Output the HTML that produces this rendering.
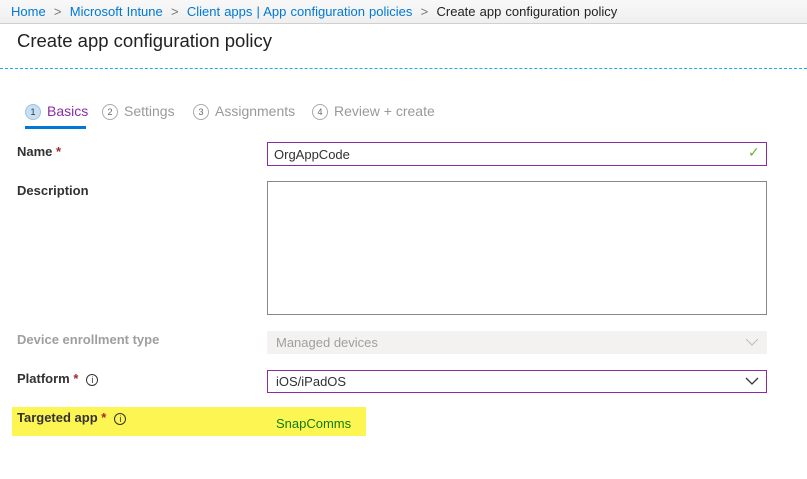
<!DOCTYPE html>
<html><head><style>
*{margin:0;padding:0;box-sizing:border-box}
body{width:807px;height:479px;background:#fff;font-family:"Liberation Sans",sans-serif;position:relative;overflow:hidden;color:#323130}
.a{position:absolute;white-space:nowrap}
.bc{left:0;top:0;width:807px;height:24px;background:linear-gradient(#f8f8f8,#efefef);border-bottom:1px solid #d0d0d0}
.lnk{color:#0078d4}
.sep{color:#777}
.lab{font-size:13px;font-weight:bold;color:#323130}
.req{color:#a4262c}
.box{border:1px solid #8a8886}
.circ{display:inline-block;width:16px;height:16px;border:1px solid #aaa;border-radius:50%;font-size:9px;text-align:center;line-height:14px;color:#666;vertical-align:1px;margin-right:6px}
.tab{font-size:14px;color:#999;top:103px}
.info{display:inline-block;width:12px;height:12px;border:1px solid #333;border-radius:50%;font-size:9px;text-align:center;line-height:10px;margin-left:8px}
</style></head><body>
<div class="a bc"></div>
<div class="a" style="left:11px;top:4px;font-size:13px;word-spacing:0.5px"><span class="lnk">Home</span> <span class="sep">&nbsp;&gt;&nbsp;</span> <span class="lnk">Microsoft Intune</span> <span class="sep">&nbsp;&gt;&nbsp;</span> <span class="lnk">Client apps | App configuration policies</span> <span class="sep">&nbsp;&gt;&nbsp;</span> <span style="color:#222">Create app configuration policy</span></div>
<div class="a" style="left:17px;top:30px;font-size:18.5px;color:#222">Create app configuration policy</div>
<div class="a" style="left:0;top:68px;width:807px;border-top:1px dashed #1ab0e0"></div>
<div class="a tab" style="left:25px"><span class="circ" style="background:#c7e0f4;border-color:#9cc3e4;color:#333">1</span><span style="color:#8a2da5">Basics</span></div>
<div class="a tab" style="left:102px"><span class="circ">2</span>Settings</div>
<div class="a tab" style="left:193px"><span class="circ">3</span>Assignments</div>
<div class="a tab" style="left:312px"><span class="circ">4</span>Review + create</div>
<div class="a" style="left:25px;top:126px;width:61px;height:3px;background:#0078d4"></div>
<div class="a lab" style="left:17px;top:144px">Name <span class="req">*</span></div>
<div class="a" style="left:267px;top:142px;width:500px;height:24px;border:1px solid #8a2da5"></div>
<div class="a" style="left:274px;top:147px;font-size:13px">OrgAppCode</div>
<div class="a" style="left:748px;top:144px;font-size:14px;color:#6bb52e">✓</div>
<div class="a lab" style="left:17px;top:183px">Description</div>
<div class="a box" style="left:267px;top:181px;width:500px;height:134px"></div>
<div class="a lab" style="left:17px;top:332px;color:#a19f9d">Device enrollment type</div>
<div class="a" style="left:267px;top:331px;width:500px;height:23px;background:#f3f2f1"></div>
<div class="a" style="left:276px;top:335px;font-size:13px;color:#a19f9d">Managed devices</div>
<svg class="a" style="left:745px;top:337px" width="14" height="10"><path d="M1 2l6 6 6-6" stroke="#bbb" fill="none"/></svg>
<div class="a lab" style="left:17px;top:371px">Platform <span class="req">*</span><span class="info" style="font-weight:normal">i</span></div>
<div class="a" style="left:267px;top:370px;width:500px;height:23px;border:1px solid #8a2da5"></div>
<div class="a" style="left:276px;top:374px;font-size:13px">iOS/iPadOS</div>
<svg class="a" style="left:745px;top:376px" width="14" height="10"><path d="M1 2l6 6 6-6" stroke="#333" fill="none" stroke-width="1.3"/></svg>
<div class="a" style="left:12px;top:407px;width:354px;height:29px;background:#fdf552"></div>
<div class="a lab" style="left:17px;top:410px">Targeted app <span class="req">*</span><span class="info" style="font-weight:normal">i</span></div>
<div class="a" style="left:276px;top:416px;font-size:13px;color:#107c10">SnapComms</div>
</body></html>
